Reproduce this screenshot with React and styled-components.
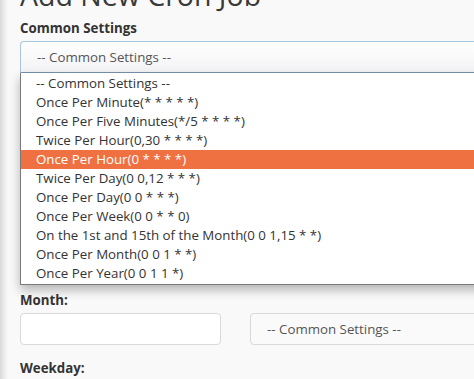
import React from "react";
import styled, { createGlobalStyle } from "styled-components";

const GlobalStyle = createGlobalStyle`
  html, body {
    margin: 0;
    padding: 0;
    background: #f9f9f9;
    overflow: hidden;
  }
  body {
    font-family: "Open Sans", "Noto Sans", Arial, sans-serif;
    color: #333;
  }
`;

const options = [
  "-- Common Settings --",
  "Once Per Minute(* * * * *)",
  "Once Per Five Minutes(*/5 * * * *)",
  "Twice Per Hour(0,30 * * * *)",
  "Once Per Hour(0 * * * *)",
  "Twice Per Day(0 0,12 * * *)",
  "Once Per Day(0 0 * * *)",
  "Once Per Week(0 0 * * 0)",
  "On the 1st and 15th of the Month(0 0 1,15 * *)",
  "Once Per Month(0 0 1 * *)",
  "Once Per Year(0 0 1 1 *)",
];

const ACTIVE = 4;

export default function App() {
  return (
    <>
      <GlobalStyle />
      <Page>
        <Edge />
        <Content>
          <Title>Add New Cron Job</Title>
          <Group>
            <Label>Common Settings</Label>
            <SelectWrap>
              <Select $focused>-- Common Settings --</Select>
              <OptionList>
                {options.map((opt, i) => (
                  <OptionItem key={i} $active={i === ACTIVE}>
                    {opt}
                  </OptionItem>
                ))}
              </OptionList>
            </SelectWrap>
          </Group>
          {["Minute:", "Hour:", "Day:", "Month:", "Weekday:"].map((name) => (
            <Group key={name}>
              <Label>{name}</Label>
              <Row>
                <Input />
                <Select>-- Common Settings --</Select>
              </Row>
            </Group>
          ))}
        </Content>
      </Page>
    </>
  );
}

const Page = styled.div`
  display: flex;
  width: 900px;
  height: 379px;
  overflow: hidden;
`;

const Edge = styled.div`
  width: 7px;
  flex-shrink: 0;
  background: linear-gradient(to right, #d9d9d9, #ececec 60%, #f6f6f6);
`;

const Content = styled.div`
  width: 700px;
  flex-shrink: 0;
  padding-left: 13px;
`;

const Title = styled.h1`
  margin: -23px 0 4px;
  font-size: 28.5px;
  font-weight: 400;
  line-height: 37px;
  color: #3a3a3a;
  white-space: nowrap;
`;

const Group = styled.div`
  margin-bottom: 13px;
`;

const Label = styled.div`
  font-size: 13.3px;
  font-weight: 700;
  line-height: 20px;
  margin-bottom: 3px;
  color: #333;
`;

const SelectWrap = styled.div`
  position: relative;
`;

const Select = styled.div`
  box-sizing: border-box;
  flex: 1;
  height: 32px;
  display: flex;
  align-items: center;
  padding-left: 16px;
  font-size: 13.3px;
  color: #555;
  white-space: nowrap;
  border-radius: 4px;
  background: ${(p) =>
    p.$focused ? "linear-gradient(#ffffff, #f3f3f5)" : "#fafafa"};
  border: 1px solid ${(p) => (p.$focused ? "#a8c6de" : "#d9d9d9")};
  ${(p) => p.$focused && "border-bottom-color: #7792ad; border-radius: 4px 4px 0 0;"}
`;

const OptionList = styled.ul`
  position: absolute;
  top: 32px;
  left: 0;
  right: 0;
  margin: 0;
  padding: 1px 0 1px;
  list-style: none;
  background: #fff;
  border: 1px solid #7a7a7a;
  border-top: none;
  box-shadow: 0 5px 10px rgba(0, 0, 0, 0.28);
  z-index: 2;
`;

const OptionItem = styled.li`
  height: 19px;
  line-height: 19px;
  padding-left: 15px;
  font-size: 13.3px;
  white-space: nowrap;
  color: ${(p) => (p.$active ? "#fff" : "#333")};
  background: ${(p) => (p.$active ? "#ef7142" : "transparent")};
`;

const Row = styled.div`
  display: flex;
  gap: 29px;
`;

const Input = styled.div`
  box-sizing: border-box;
  width: 201px;
  height: 32px;
  border: 1px solid #d9d9d9;
  border-radius: 4px;
  background: #fff;
`;
